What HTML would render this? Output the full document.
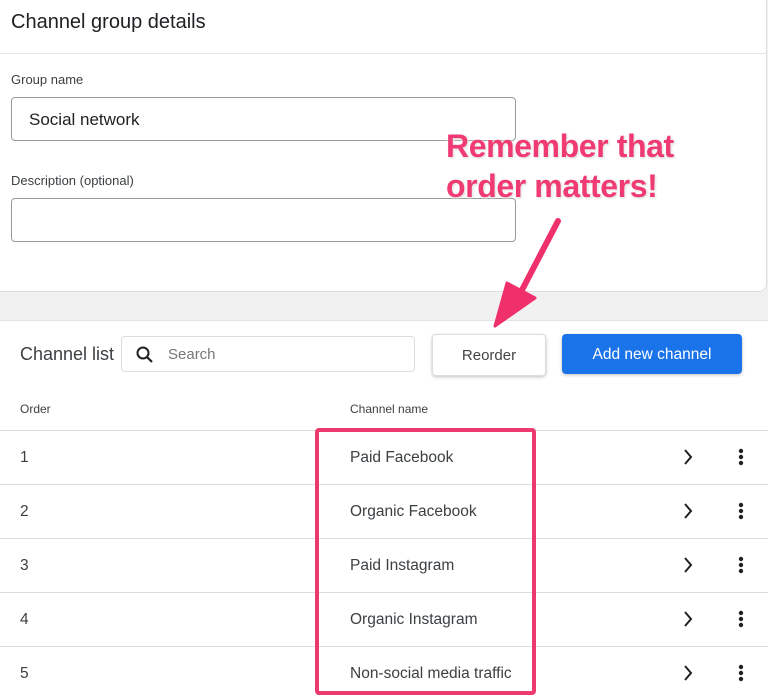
<!DOCTYPE html>
<html><head><style>
body{margin:0;width:768px;height:697px;overflow:hidden;background:#f1f1f1;font-family:"Liberation Sans",sans-serif;position:relative;color:#202124}
.card1{position:absolute;left:0;top:0;width:766px;height:291px;background:#fff;border-right:1px solid #ddd;border-bottom:1px solid #ddd;border-radius:0 0 8px 0}
.card2{position:absolute;left:0;top:320px;width:768px;height:377px;background:#fff;border-top:1px solid #e3e3e3}
.a{position:absolute}
.inp{position:absolute;left:11px;width:503px;height:42px;border:1px solid #9a9a9a;border-radius:4px;background:#fff}
.line{position:absolute;left:0;width:768px;height:1px;background:#dcdcdc}
.row{position:absolute;font-size:15.5px;color:#3c4043}
.ann{position:absolute;left:446px;font-size:32px;font-weight:bold;color:#ef3a72;text-shadow:0 0 3px #fff,1px 1px 2px #ccc;letter-spacing:-0.4px}
</style></head><body>
<div class="card1">
<div class="a" style="left:11px;top:11px;font-size:20px">Channel group details</div>
<div class="line" style="top:53px;width:766px;background:#e6e6e6"></div>
<div class="a" style="left:11px;top:72px;font-size:13px;color:#3c4043">Group name</div>
<div class="inp" style="top:97px"><div class="a" style="left:17px;top:12px;font-size:17px">Social network</div></div>
<div class="a" style="left:11px;top:173px;font-size:13px;color:#3c4043">Description (optional)</div>
<div class="inp" style="top:198px"></div>
</div>
<div class="card2">
<div class="a" style="left:20px;top:23px;font-size:18px;color:#3c4043">Channel list</div>
<div class="a" style="left:121px;top:15px;width:292px;height:34px;border:1px solid #ddd;border-radius:4px">
<svg class="a" style="left:13px;top:8px" width="20" height="20" viewBox="0 0 20 20"><circle cx="8" cy="8" r="5.5" fill="none" stroke="#202124" stroke-width="2"/><line x1="12" y1="12" x2="17" y2="17" stroke="#202124" stroke-width="2.2"/></svg>
<div class="a" style="left:46px;top:9px;font-size:15px;color:#777">Search</div></div>
<div class="a" style="left:432px;top:13px;width:112px;height:40px;border:1px solid #ddd;border-radius:4px;box-shadow:0 1px 3px rgba(0,0,0,.25);text-align:center;line-height:42px;font-size:15px;color:#444">Reorder</div>
<div class="a" style="left:562px;top:13px;width:180px;height:40px;background:#1a73e8;border-radius:4px;box-shadow:0 1px 3px rgba(0,0,0,.25);text-align:center;line-height:42px;font-size:15.5px;color:#fff">Add new channel</div>
<div class="a" style="left:20px;top:81px;font-size:12px;color:#3c4043">Order</div>
<div class="a" style="left:350px;top:81px;font-size:12px;color:#3c4043">Channel name</div>
</div>
<div class="line" style="top:430px"></div>
<div class="line" style="top:484px"></div>
<div class="line" style="top:538px"></div>
<div class="line" style="top:592px"></div>
<div class="line" style="top:646px"></div>
<div class="row" style="left:20px;top:449px">1</div><div class="row" style="left:350px;top:449px">Paid Facebook</div>
<div class="row" style="left:20px;top:503px">2</div><div class="row" style="left:350px;top:503px">Organic Facebook</div>
<div class="row" style="left:20px;top:557px">3</div><div class="row" style="left:350px;top:557px">Paid Instagram</div>
<div class="row" style="left:20px;top:611px">4</div><div class="row" style="left:350px;top:611px">Organic Instagram</div>
<div class="row" style="left:20px;top:665px">5</div><div class="row" style="left:350px;top:665px">Non-social media traffic</div>
<svg class="a" style="left:0;top:0" width="768" height="697">
<g fill="none" stroke="#202124" stroke-width="2">
<path d="M685 450l6 7-6 7"/><path d="M685 504l6 7-6 7"/><path d="M685 558l6 7-6 7"/><path d="M685 612l6 7-6 7"/><path d="M685 666l6 7-6 7"/></g>
<g fill="#202124">
<circle cx="741" cy="451" r="2.2"/><circle cx="741" cy="457" r="2.2"/><circle cx="741" cy="463" r="2.2"/>
<circle cx="741" cy="505" r="2.2"/><circle cx="741" cy="511" r="2.2"/><circle cx="741" cy="517" r="2.2"/>
<circle cx="741" cy="559" r="2.2"/><circle cx="741" cy="565" r="2.2"/><circle cx="741" cy="571" r="2.2"/>
<circle cx="741" cy="613" r="2.2"/><circle cx="741" cy="619" r="2.2"/><circle cx="741" cy="625" r="2.2"/>
<circle cx="741" cy="667" r="2.2"/><circle cx="741" cy="673" r="2.2"/><circle cx="741" cy="679" r="2.2"/></g>
<rect x="317" y="430" width="217" height="263" fill="none" stroke="#ec3a6f" stroke-width="4" rx="2"/>
<path d="M558 221 L522 290" stroke="#f0306a" stroke-width="6" stroke-linecap="round"/>
<path d="M495 326 L507 283 L535 298 Z" fill="#f0306a" stroke="#f0306a" stroke-width="3" stroke-linejoin="round"/>
</svg>
<div class="ann" style="top:128px">Remember that</div>
<div class="ann" style="top:168px">order matters!</div>
</body></html>
